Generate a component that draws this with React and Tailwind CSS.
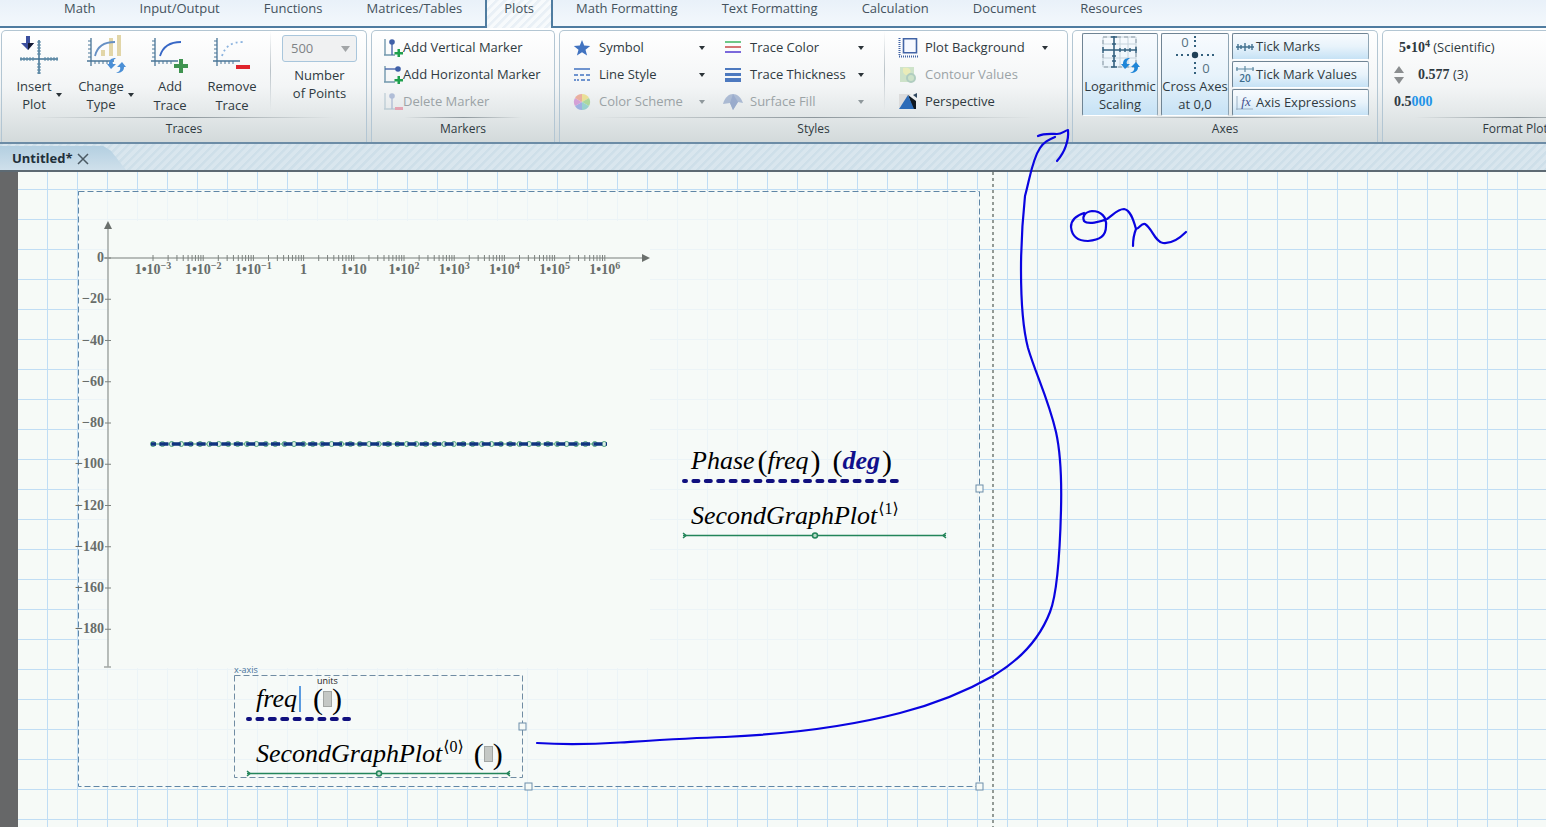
import { useState } from 'react';

const TABS = [
  'Math',
  'Input/Output',
  'Functions',
  'Matrices/Tables',
  'Plots',
  'Math Formatting',
  'Text Formatting',
  'Calculation',
  'Document',
  'Resources',
];

const SUPERSCRIPTS = ['−3', '−2', '−1', null, '', '2', '3', '4', '5', '6'];

// x of a power of ten on the plot, 50px per decade
const decadeX = (i) => 75 + i * 50.2;
const degreeY = (deg) => 67 - deg * 2.0625;

function Caret({ muted }) {
  return (
    <svg width="6" height="4" viewBox="0 0 6 4" className={muted ? 'shrink-0 fill-[#8f989c]' : 'shrink-0 fill-[#2b3338]'}>
      <path d="M0 0h6L3 4z" />
    </svg>
  );
}

function GraphAxes() {
  return (
    <g stroke="#4a7698" strokeWidth="1.3" fill="none">
      <path d="M5 3v28M1 26h27" />
      <path d="M2 6h3M2 10h3M2 14h3M2 18h3M2 22h3M9 26v3M13 26v3M17 26v3M21 26v3" strokeWidth="1" />
    </g>
  );
}

function RefreshArrows({ color = '#4b8fd6' }) {
  return (
    <g fill={color}>
      <path d="M9 0C4 0 2 2 2 6H0l4 5 5-5H6C5 4 6 2 9 0z" />
      <path d="M9 15c5 0 8-2 8-6h2l-4-5-5 5h3c1 3-1 5-4 6z" />
    </g>
  );
}

function InsertPlotIcon() {
  return (
    <svg width="40" height="40" viewBox="0 0 40 40">
      <path d="M20 5v34M1 24h38" stroke="#3f7294" strokeWidth="1.5" />
      <path d="M18 7h4M18 10h4M18 13h4M18 16h4M18 19h4M18 29h4M18 32h4M18 35h4M18 38h4" stroke="#5484a2" />
      <path d="M2 22v4M5 22v4M8 22v4M11 22v4M14 22v4M26 22v4M29 22v4M32 22v4M35 22v4M38 22v4" stroke="#5484a2" />
      <path d="M7 1h4v7h4l-6 7-7-7h5z" fill="#3c4f9e" />
      <path d="M9 8h6l-6 7z" fill="#151b33" />
    </svg>
  );
}

function ChangeTypeIcon() {
  return (
    <svg width="40" height="40" viewBox="0 0 40 40">
      <path d="M15 15h4v6h-4zM23 3h4v18h-4zM31 0h4v21h-4z" fill="#e2d6a8" />
      <GraphAxes />
      <path d="M9 21C11 12 18 7 29 7" fill="none" stroke="#6690c4" strokeWidth="1.8" />
      <g transform="translate(21 23)"><RefreshArrows /></g>
    </svg>
  );
}

function AddTraceIcon() {
  return (
    <svg width="40" height="40" viewBox="0 0 40 40">
      <GraphAxes />
      <path d="M10 21C13 11 20 7 31 7" fill="none" stroke="#3767c6" strokeWidth="1.8" />
      <path d="M29 24h4v5h5v4h-5v5h-4v-5h-5v-4h5z" fill="#3f9350" />
    </svg>
  );
}

function RemoveTraceIcon() {
  return (
    <svg width="40" height="40" viewBox="0 0 40 40">
      <GraphAxes />
      <path d="M10 21C13 11 20 7 31 7" fill="none" stroke="#8db4df" strokeWidth="1.8" strokeDasharray="2 3" />
      <path d="M24 30h14v4H24z" fill="#e0242c" />
    </svg>
  );
}

function MarkerIcon({ kind }) {
  const muted = kind === 'delete';
  return (
    <svg width="20" height="18" viewBox="0 0 20 18" opacity={muted ? 0.35 : 1}>
      <path d="M2 0v16M1 16h11" stroke="#7298ad" strokeWidth="1.4" />
      {kind === 'horizontal' ? (
        <>
          <path d="M2 3h12" stroke="#4a68ad" strokeWidth="1.4" />
          <circle cx="15" cy="3" r="2.8" fill="#4060a8" />
        </>
      ) : (
        <>
          <path d="M9 3v13" stroke="#4a68ad" strokeWidth="1.4" />
          <circle cx="9" cy="3" r="2.8" fill="#4060a8" />
        </>
      )}
      {muted ? (
        <path d="M12 14h8v3h-8z" fill="#e0244c" />
      ) : (
        <path d="M14.500 10h2.500v3h3v2.500h-3v2.500h-2.500v-2.500h-3V13h3z" fill="#1fa04d" />
      )}
    </svg>
  );
}

function StyleIcon({ name }) {
  return (
    <svg width="20" height="20" viewBox="0 0 20 20">
      {name === 'symbol' && <path d="M10 2l2.2 5.600 6 .3-4.700 3.800 1.600 5.900L10 14.300 4.900 17.600l1.600-5.900L1.800 7.900l6-.3z" fill="#4173c0" />}
      {name === 'line' && (
        <g stroke="#6f94cf" strokeWidth="2">
          <path d="M2 4h16" />
          <path d="M2 10h4M8 10h4M14 10h4" />
          <path d="M2 15h2M5 15h2M9 15h4M15 15h3" />
        </g>
      )}
      {name === 'scheme' && (
        <g opacity="0.5">
          <path d="M10 10V2a8 8 0 0 1 7 4z" fill="#e8d040" />
          <path d="M10 10l7-4a8 8 0 0 1 0 8z" fill="#74c44c" />
          <path d="M10 10l7 4a8 8 0 0 1-7 4z" fill="#4cb8b0" />
          <path d="M10 10v8a8 8 0 0 1-7-4z" fill="#5878d8" />
          <path d="M10 10l-7 4a8 8 0 0 1 0-8z" fill="#c058c0" />
          <path d="M10 10L3 6a8 8 0 0 1 7-4z" fill="#e87050" />
        </g>
      )}
      {name === 'color' && (
        <g strokeWidth="1.5">
          <path d="M2 4h16" stroke="#3fb560" />
          <path d="M2 9h16" stroke="#c84848" />
          <path d="M2 14h16" stroke="#5038d0" />
        </g>
      )}
      {name === 'thickness' && <path d="M2 3h16v2H2zM2 8h16v3H2zM2 13h16v4H2z" fill="#4d79bf" />}
      {name === 'surface' && (
        <g opacity="0.5">
          <path d="M0 12C2 5 6 2 10 2s8 3 10 9l-5-1-5 8-3-7z" fill="#6d88b8" />
          <path d="M7 11l3-9 5 8-5 8z" fill="#4c6cab" />
        </g>
      )}
      {name === 'background' && (
        <g fill="none">
          <path d="M5.500 .8h13v14h-13z" stroke="#4264a6" strokeWidth="1.600" fill="#f6f9ff" />
          <path d="M1.500 0v18M1 18.500h19" stroke="#4264a6" strokeWidth="2" strokeDasharray="1 1" />
        </g>
      )}
      {name === 'contour' && (
        <g opacity="0.5">
          <path d="M2 2h14v15H2z" fill="#a7cf9c" />
          <path d="M5 3c5-1 9 1 7 5s-6 2-7-1z" fill="#dfe27c" />
          <circle cx="13" cy="13" r="4" fill="none" stroke="#6ea58a" strokeWidth="2" />
        </g>
      )}
      {name === 'perspective' && (
        <g>
          <path d="M1 2h12L1 16z" fill="#dcdcdc" />
          <path d="M10 3l8 6v8h-3z" fill="#101820" />
          <path d="M10 3L1 17h15z" fill="#2d6cb8" />
          <path d="M15 3l4-2v5z" fill="#304860" />
        </g>
      )}
    </svg>
  );
}

function LogScalingIcon() {
  return (
    <svg width="40" height="40" viewBox="0 0 40 40">
      <path d="M3 3h33v30H3zM3 10h33M3 24h33M20 3v30M28 3v30" fill="none" stroke="#c6d3dc" />
      <path d="M3 3h33v30H3z" fill="none" stroke="#8b9ba7" strokeDasharray="4 3" />
      <path d="M14 2v31M3 16h34" stroke="#33607f" strokeWidth="1.600" />
      <path d="M11 3h6M12 10h4M12 22h4M12 27h4M11 33h6M3 13v6M20 14v4M25 14v4M30 14v4M36 13v6" stroke="#33607f" strokeWidth="1.400" />
      <g transform="translate(21 24)"><RefreshArrows color="#1f86d8" /></g>
    </svg>
  );
}

function CrossAxesIcon() {
  return (
    <svg width="40" height="40" viewBox="0 0 40 40" className="overflow-visible">
      <circle cx="20" cy="21" r="3.200" fill="#1f3f56" />
      <g fill="#34617e">
        <path d="M19 2h2v2h-2zM19 6h2v2h-2zM19 11h2v2h-2zM19 28h2v2h-2zM19 33h2v2h-2zM19 38h2v2h-2z" />
        <path d="M1 20h2v2H1zM6 20h2v2H6zM12 20h2v2h-2zM26 20h2v2h-2zM32 20h2v2h-2zM37 20h2v2h-2z" />
      </g>
      <text x="10" y="13" textAnchor="middle" className="fill-[#54717f] font-['Open_Sans',sans-serif] text-[13px]">0</text>
      <text x="31" y="39" textAnchor="middle" className="fill-[#54717f] font-['Open_Sans',sans-serif] text-[13px]">0</text>
    </svg>
  );
}

function AxisRowIcon({ name }) {
  return (
    <svg width="18" height="18" viewBox="0 0 18 18" className="overflow-visible">
      {name === 'marks' && (
        <path d="M0 9h18M2 6v6M5 7v4M9 5v8M13 7v4M16 6v6" stroke="#40708f" strokeWidth="1.400" />
      )}
      {name === 'values' && (
        <>
          <path d="M0 3h18M1 1v4M9 0v6M17 1v4" stroke="#5f8aa3" strokeWidth="1.200" />
          <text x="9" y="16" textAnchor="middle" className="fill-[#3c6d8d] font-['Open_Sans',sans-serif] text-[10px] font-semibold">20</text>
        </>
      )}
      {name === 'expr' && (
        <>
          <path d="M1 2v14M0 15h17" stroke="#9ab0c4" />
          <text x="10" y="12" textAnchor="middle" className="fill-[#44508c] font-['Liberation_Serif',serif] text-[13px] italic">fx</text>
        </>
      )}
    </svg>
  );
}

function Group({ title, className, children }) {
  return (
    <section
      aria-label={title}
      className={`flex shrink-0 flex-col rounded-t-[5px] border border-b-0 border-[#b3c6d3] bg-linear-to-b from-white via-[#f3f5f6] via-50% to-[#d3dadb] ${className}`}
    >
      <div className="flex h-[86px] items-start">{children}</div>
      <div className="mx-8 h-px bg-linear-to-r from-transparent via-[#8d979c] to-transparent" />
      <h2 className="pt-px pb-[3px] text-center text-[12px] leading-[20px]">{title}</h2>
    </section>
  );
}

function BigButton({ icon, lines, menu, className }) {
  return (
    <button type="button" className={`flex flex-col items-center pt-[4px] ${className}`}>
      {icon}
      <span className={`flex items-center gap-1 pt-[2px] ${menu ? 'leading-[18px]' : 'leading-[19px]'}`}>
        <span>{lines[0]}<br />{lines[1]}</span>
        {menu && <Caret />}
      </span>
    </button>
  );
}

function RowButton({ icon, label, menu, disabled, className = '' }) {
  return (
    <button
      type="button"
      disabled={disabled}
      className={`flex h-[27px] items-center whitespace-nowrap disabled:text-[#9ba3a6] ${className}`}
    >
      {icon}
      <span className="flex-1 text-left">{label}</span>
      {menu && <Caret muted={disabled} />}
    </button>
  );
}

function Divider() {
  return <div className="h-[80px] w-px bg-linear-to-b from-transparent via-[#b9c2c8] to-transparent" />;
}

const toggleStyle =
  'border border-t-[#6f8494] border-l-[#6f8494] border-r-[#8fa5b4] border-b-white rounded-[2px] bg-linear-to-b from-[#f8fbfe] via-[#e8f3fb] to-[#c6e2f5]';

function Ribbon() {
  const [points, setPoints] = useState('500');

  return (
    <div className="flex gap-1 overflow-hidden border-b-2 border-[#6c8ca6] bg-linear-to-b from-white via-[#f3f5f6] via-50% to-[#d0d8da] px-px pt-[2px]">
      <Group title="Traces" className="w-[366px]">
        <BigButton icon={<InsertPlotIcon />} lines={['Insert', 'Plot']} menu className="ml-[5px] w-[64px]" />
        <BigButton icon={<ChangeTypeIcon />} lines={['Change', 'Type']} menu className="w-[70px]" />
        <BigButton icon={<AddTraceIcon />} lines={['Add', 'Trace']} className="w-[58px]" />
        <BigButton icon={<RemoveTraceIcon />} lines={['Remove', 'Trace']} className="w-[66px]" />
        <div className="ml-[5px]"><Divider /></div>
        <div className="ml-[11px] flex flex-col pt-[4px]">
          <div className="relative">
            <select
              id="points"
              disabled
              value={points}
              onChange={(e) => setPoints(e.target.value)}
              className="h-[27px] w-[75px] appearance-none rounded-[3px] border border-[#a9c6dc] bg-[#f0f1f2] px-2 text-[#7f8386] opacity-100"
            >
              <option>500</option>
            </select>
            <svg width="9" height="6" viewBox="0 0 9 6" className="absolute top-[11px] right-[7px] fill-[#a2a5a7]">
              <path d="M0 0h9L4.500 6z" />
            </svg>
          </div>
          <label htmlFor="points" className="pt-[4px] text-center leading-[18px]">
            Number<br />of Points
          </label>
        </div>
      </Group>

      <Group title="Markers" className="w-[184px]">
        <div className="flex flex-col pt-[3px] pl-[11px]">
          <RowButton icon={<MarkerIcon kind="vertical" />} label="Add Vertical Marker" />
          <RowButton icon={<MarkerIcon kind="horizontal" />} label="Add Horizontal Marker" />
          <RowButton icon={<MarkerIcon kind="delete" />} label="Delete Marker" disabled />
        </div>
      </Group>

      <Group title="Styles" className="w-[509px]">
        <div className="ml-[12px] flex w-[133px] flex-col pt-[3px]">
          <RowButton className="gap-[7px]" icon={<StyleIcon name="symbol" />} label="Symbol" menu />
          <RowButton className="gap-[7px]" icon={<StyleIcon name="line" />} label="Line Style" menu />
          <RowButton className="gap-[7px]" icon={<StyleIcon name="scheme" />} label="Color Scheme" menu disabled />
        </div>
        <div className="ml-[18px] flex w-[141px] flex-col pt-[3px]">
          <RowButton className="gap-[7px]" icon={<StyleIcon name="color" />} label="Trace Color" menu />
          <RowButton className="gap-[7px]" icon={<StyleIcon name="thickness" />} label="Trace Thickness" menu />
          <RowButton className="gap-[7px]" icon={<StyleIcon name="surface" />} label="Surface Fill" menu disabled />
        </div>
        <div className="ml-[20px]"><Divider /></div>
        <div className="ml-[13px] flex w-[150px] flex-col pt-[3px]">
          <RowButton className="gap-[7px]" icon={<StyleIcon name="background" />} label="Plot Background" menu />
          <RowButton className="gap-[7px]" icon={<StyleIcon name="contour" />} label="Contour Values" disabled />
          <RowButton className="gap-[7px]" icon={<StyleIcon name="perspective" />} label="Perspective" />
        </div>
      </Group>

      <Group title="Axes" className="w-[306px]">
        <div className="flex gap-[3px] pt-[2px] pl-[9px]">
          <button type="button" aria-pressed="true" className={`flex h-[83px] w-[76px] flex-col items-center ${toggleStyle}`}>
            <LogScalingIcon />
            <span className="pt-[3px] leading-[18px]">Logarithmic<br />Scaling</span>
          </button>
          <button type="button" aria-pressed="true" className={`flex h-[83px] w-[68px] flex-col items-center whitespace-nowrap ${toggleStyle}`}>
            <CrossAxesIcon />
            <span className="pt-[3px] leading-[18px]">Cross Axes<br />at 0,0</span>
          </button>
          <div className="flex w-[137px] flex-col gap-px">
            <RowButton className={`gap-[2px] pl-[3px] ${toggleStyle}`} icon={<AxisRowIcon name="marks" />} label="Tick Marks" />
            <RowButton className={`gap-[2px] pl-[3px] ${toggleStyle}`} icon={<AxisRowIcon name="values" />} label="Tick Mark Values" />
            <RowButton className={`gap-[2px] pl-[3px] ${toggleStyle}`} icon={<AxisRowIcon name="expr" />} label="Axis Expressions" />
          </div>
        </div>
      </Group>

      <Group title="Format Plots" className="w-[272px]">
        <div className="flex flex-col pt-[3px] pl-[11px]">
          <RowButton
            className="pl-[5px]"
            label={
              <>
                <span className="font-['Liberation_Serif',serif] text-[14px] font-bold">5•10<sup className="text-[10px]">4</sup></span> (Scientific)
              </>
            }
          />
          <div className="flex h-[27px] items-center gap-[14px]">
            <span className="flex flex-col gap-1">
              <button type="button" aria-label="More digits">
                <svg width="10" height="7" viewBox="0 0 10 7" className="fill-[#8a8d8f]"><path d="M0 7h10L5 0z" /></svg>
              </button>
              <button type="button" aria-label="Fewer digits">
                <svg width="10" height="7" viewBox="0 0 10 7" className="fill-[#8a8d8f]"><path d="M0 0h10L5 7z" /></svg>
              </button>
            </span>
            <span>
              <span className="font-['Liberation_Serif',serif] text-[14px] font-bold">0.577</span> (3)
            </span>
          </div>
          <RowButton
            label={
              <span className="font-['Liberation_Serif',serif] text-[14px] font-bold">
                0.5<span className="text-[#1e93e8]">000</span>
              </span>
            }
          />
        </div>
      </Group>
    </div>
  );
}

function Handle({ x, y }) {
  return <rect x={x - 3.5} y={y - 3.5} width="7" height="7" fill="#f6faf7" stroke="#6d8eaa" />;
}

function PlotDrawing() {
  const ticks = [];
  for (let d = 0; d < 9; d++) {
    for (let m = 1; m < 10; m++) ticks.push(decadeX(d) + Math.log10(m) * 50.2);
  }
  ticks.push(decadeX(9));
  const degrees = [0, -20, -40, -60, -80, -100, -120, -140, -160, -180];
  const dots = Array.from({ length: 49 }, (_, i) => 75 + i * 9.4);

  return (
    <svg width="910" height="604" className="absolute top-0 left-0 overflow-visible">
      <rect x="31" y="30" width="541" height="447" fill="#f6faf7" />
      <rect x="0.5" y="0.5" width="901" height="595" fill="none" stroke="#5f86a6" strokeDasharray="6 3" />

      {/* axes */}
      <g fill="none" stroke="#a3a8a5" strokeWidth="1.5">
        <path d="M30 34V476" />
        <path d="M26 67h540M26 476h7" />
      </g>
      <path d="M30 30l4 8h-8zM572 67l-8-4v8z" fill="#6b706d" />
      <g stroke="#7c827f">
        {ticks.map((x) => <path key={x} d={`M${x} 64v6`} />)}
        {degrees.map((d) => <path key={d} d={`M27 ${degreeY(d)}h6`} />)}
      </g>

      <g className="fill-[#686d6a] font-['Liberation_Serif',serif] text-[14px] font-bold">
        {degrees.map((d) => (
          <text key={d} x="26" y={degreeY(d) + 4} textAnchor="end">{String(d).replace('-', '−')}</text>
        ))}
        {SUPERSCRIPTS.map((s, i) => (
          <text key={i} x={decadeX(i)} y="83" textAnchor="middle">
            {s === null ? '1' : '1•10'}
            {s && <tspan dy="-5" className="text-[10px]">{s}</tspan>}
          </text>
        ))}
      </g>

      {/* the two traces lie on top of each other at -90 */}
      <path d="M75 253h452" stroke="#37946a" />
      {dots.map((x) => (
        <circle key={x} cx={x} cy="253" r="2.500" stroke="#4fa27c" fill="#dcefe4" />
      ))}
      <path d="M73 253h456" stroke="#10347f" strokeWidth="3.500" strokeDasharray="9 3.400" strokeDashoffset="4" />

      {/* trace samples under the legends */}
      <path d="M606 290h214M170 528h101" stroke="#10107f" strokeWidth="4" strokeDasharray="5 7.400" strokeDashoffset="3" strokeLinecap="round" />
      <g fill="none" stroke="#23855a" strokeWidth="1.500">
        <path d="M605 344.500h263M169 582.500h263" />
        <circle cx="737" cy="344.500" r="2.500" fill="#b8dcc8" />
        <circle cx="301" cy="582.500" r="2.500" fill="#b8dcc8" />
        <path d="M605 342l3 2.500-3 2.500M868 342l-3 2.500 3 2.500M169 580l3 2.500-3 2.500M432 580l-3 2.500 3 2.500" />
      </g>

      <rect x="156.500" y="484.500" width="288" height="102" fill="none" stroke="#708ca3" strokeDasharray="6 3" />
      <Handle x={901.5} y={297.5} />
      <Handle x={450.5} y={595.5} />
      <Handle x={901.5} y={595.5} />
      <Handle x={444.5} y={535.5} />
    </svg>
  );
}

function Paren({ children, className = '' }) {
  return <span className={`text-[30px] ${className}`}>{children}</span>;
}

function Placeholder() {
  return <span className="h-[16px] w-[9px] shrink-0 border border-[#a2a6a3] bg-[#c4c8c5]" />;
}

const mathStyle =
  "absolute flex items-center whitespace-pre font-['Liberation_Serif','DejaVu_Sans',serif] text-[26px] leading-[26px] text-black";

function PlotRegion() {
  return (
    <div className="absolute top-[19px] left-[60px] h-[596px] w-[902px] bg-[#f6faf7]/80">
      <PlotDrawing />

      <div className={`${mathStyle} top-[257px] left-[613px]`}>
        <i>Phase</i>
        <Paren className="pl-[3px]">(</Paren>
        <i>freq</i>
        <Paren className="pl-[2px]">)</Paren>
        <Paren className="pl-[12px]">(</Paren>
        <b className="text-[#10108c] italic">deg</b>
        <Paren className="pl-[2px]">)</Paren>
      </div>
      <div className={`${mathStyle} top-[312px] left-[613px]`}>
        <i>SecondGraphPlot</i>
        <span className="self-start pl-px text-[16px] leading-[12px]">⟨1⟩</span>
      </div>

      <span className="absolute top-[473px] left-[156px] font-['Open_Sans',sans-serif] text-[9px] leading-[12px] text-[#47739a]">x-axis</span>
      <div className={`${mathStyle} top-[495px] left-[178px]`}>
        <i>freq</i>
        <span className="ml-[2px] h-[26px] w-[2px] bg-[#5b9be0]" />
        <Paren className="pl-[12px]">(</Paren>
        <Placeholder />
        <Paren>)</Paren>
      </div>
      <span className="absolute top-[484px] left-[239px] font-['Open_Sans',sans-serif] text-[9px] leading-[12px] text-[#222]">units</span>
      <div className={`${mathStyle} top-[550px] left-[178px]`}>
        <i>SecondGraphPlot</i>
        <span className="self-start pl-px text-[16px] leading-[12px]">⟨0⟩</span>
        <Paren className="pl-[10px]">(</Paren>
        <Placeholder />
        <Paren>)</Paren>
      </div>
    </div>
  );
}

// freehand pen notes drawn over ribbon and worksheet
function InkLayer() {
  return (
    <svg width="1200" height="760" className="pointer-events-none absolute top-0 left-0" fill="none" stroke="#0a04e0" strokeWidth="2.200" strokeLinecap="round" strokeLinejoin="round">
      <path d="M537 743C560 744.500 580 745 620 742.500C660 740 690 738 725 737C790 734 850 726 900 713C935 704 965 692 993 676C1020 660 1040 638 1050 612C1058 592 1060 550 1061 510C1062 470 1060 450 1056 432C1048 398 1036 375 1028 348C1022 325 1021 290 1021 270C1021 240 1023 215 1025 196C1030 178 1032 160 1040 148C1044 142 1048 140 1055 137" />
      <path d="M1038 136C1044 133 1052 134 1057 134C1062 134 1064 131 1068 130C1069 140 1065 152 1057 161" />
      <path d="M1084 213C1075 216 1071 221 1071 227C1072 237 1078 241 1088 241C1100 240 1106 236 1106 226C1107 217 1101 211 1092 211C1085 212 1082 216 1084 221C1088 225 1100 222 1107 219C1114 214 1118 209 1124 209C1130 210 1133 218 1136 229C1134 234 1133 239 1133 246" />
      <path d="M1136 229C1140 228 1141 223 1145 224C1152 228 1155 242 1163 243C1172 244 1180 238 1186 232" />
    </svg>
  );
}

export default function App() {
  const [activeTab, setActiveTab] = useState('Plots');

  return (
    <div className="relative flex min-h-screen flex-col overflow-hidden font-['Open_Sans',sans-serif] text-[13px] text-[#2f3a41]">
      <nav className="flex h-[28px] shrink-0 border-b-2 border-[#4f7ca0] bg-linear-to-b from-[#e9f1f9] to-[#f3f8fc] pl-[42px] text-[#44525d]">
        {TABS.map((tab) => (
          <button
            key={tab}
            type="button"
            onClick={() => setActiveTab(tab)}
            className={
              tab === activeTab
                ? 'mx-px -mb-[2px] border-x-2 border-[#4f7ca0] bg-[repeating-linear-gradient(135deg,#e9f0f6_0px,#e9f0f6_2px,#f7fafc_3px,#f7fafc_6px)] px-[17px] pb-[11px] leading-[17px] whitespace-nowrap'
                : 'px-[22px] pb-[9px] leading-[17px] whitespace-nowrap'
            }
          >
            {tab}
          </button>
        ))}
      </nav>

      <Ribbon />

      <div className="flex h-[28px] shrink-0 items-end border-b-2 border-[#5d6a73] bg-[repeating-linear-gradient(135deg,#cedfe9_0px,#cedfe9_2px,#d9e6ee_3px,#d9e6ee_6px)]">
        <div className="flex h-[24px] w-[126px] items-center gap-1 bg-linear-to-b from-[#b3cfe1] to-[#cfe0eb] pt-[2px] pl-[12px] [clip-path:polygon(0_0,82%_0,88%_20%,100%_100%,0_100%)]">
          <span className="font-bold text-[#22303a]">Untitled*</span>
          <button type="button" aria-label="Close">
            <svg width="12" height="12" viewBox="0 0 12 12" stroke="#4c5a64" strokeWidth="1.500"><path d="M1 1l10 10M11 1L1 11" /></svg>
          </button>
        </div>
      </div>

      <main className="flex grow">
        <div className="w-[18px] shrink-0 bg-[#666768]" />
        <div className="relative min-h-[640px] grow overflow-hidden bg-[#f6faf7] bg-[linear-gradient(to_right,#c0ddf4_1px,transparent_1px),linear-gradient(to_bottom,#c0ddf4_1px,transparent_1px)] bg-size-[30px_30px] bg-position-[29px_17px]">
          <div className="absolute inset-y-0 left-[974px] w-[2px] bg-[repeating-linear-gradient(to_bottom,#929a95_0px,#929a95_3px,transparent_3px,transparent_6px)]" />
          <PlotRegion />
        </div>
      </main>

      <InkLayer />
    </div>
  );
}
